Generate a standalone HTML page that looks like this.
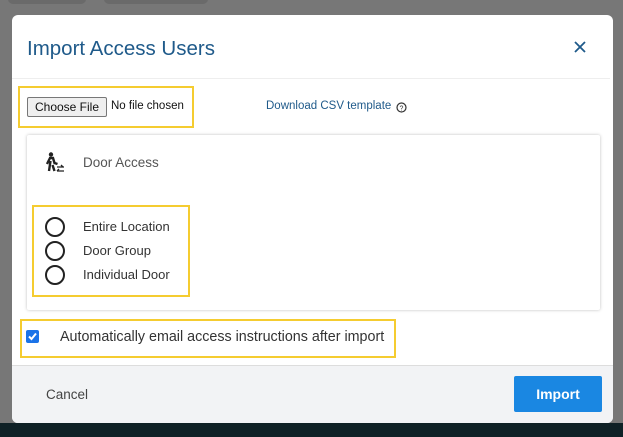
<!DOCTYPE html>
<html><head><style>
*{margin:0;padding:0;box-sizing:border-box}
body{width:623px;height:437px;background:#777;position:relative;overflow:hidden;font-family:"Liberation Sans",sans-serif;color:#333}
.a{position:absolute}
</style></head><body>
<div class="a" style="left:8px;top:-6px;width:78px;height:10px;border-radius:5px;background:#6a6a6a"></div>
<div class="a" style="left:104px;top:-6px;width:104px;height:10px;border-radius:5px;background:#6a6a6a"></div>
<div class="a" style="left:0;top:423px;width:623px;height:14px;background:#0f2126"></div>
<div class="a" style="left:12px;top:15px;width:601px;height:408px;background:#fff;border-radius:6px;overflow:hidden">
  <div class="a" style="left:15px;top:22px;font-size:20.5px;color:#1f5a8a">Import Access Users</div>
  <svg class="a" style="left:561px;top:25px" width="14" height="14"><path d="M2 2L12 12M12 2L2 12" stroke="#1f5a8a" stroke-width="1.8"/></svg>
  <div class="a" style="left:0;top:63px;width:598px;height:1px;background:#eee"></div>
  <div class="a" style="left:6px;top:71px;width:176px;height:42px;border:2px solid #f5cc30"></div>
  <div class="a" style="left:15px;top:82px;width:80px;height:20px;border:1px solid #777;background:#efefef;border-radius:2px;font-size:12px;text-align:center;line-height:18px;color:#111">Choose File</div>
  <div class="a" style="left:99px;top:85px;font-size:11.5px;color:#111">No file chosen</div>
  <div class="a" style="left:254px;top:85px;font-size:11.5px;color:#1f5a8a">Download CSV template</div>
  <svg class="a" style="left:384px;top:87px" width="11" height="11"><circle cx="5.5" cy="5.5" r="4.5" fill="none" stroke="#333" stroke-width="1.2"/><text x="5.5" y="8.5" font-size="7" text-anchor="middle" font-family="Liberation Sans" fill="#333">?</text></svg>
  <div class="a" style="left:15px;top:120px;width:573px;height:175px;background:#fff;box-shadow:0 0 3px rgba(0,0,0,.25);border-radius:2px"></div>
  <svg class="a" style="left:32px;top:137px" width="22" height="22"><circle cx="7" cy="2.5" r="2.2" fill="#222"/><path d="M5 6h4l1.5 5 3 1M6 6l-3 6M6.5 9l-1.5 10M8.5 13l2 6" stroke="#222" stroke-width="2.4" fill="none"/><path d="M13 15h7M17 13l2 2M20 19h-7M15 17l-2 2" stroke="#222" stroke-width="1.3" fill="none"/></svg>
  <div class="a" style="left:71px;top:140px;font-size:13.5px;color:#555">Door Access</div>
  <div class="a" style="left:20px;top:190px;width:158px;height:92px;border:2px solid #f5cc30"></div>
  <div class="a" style="left:33px;top:202px;width:20px;height:20px;border:2px solid #222;border-radius:50%"></div>
  <div class="a" style="left:33px;top:226px;width:20px;height:20px;border:2px solid #222;border-radius:50%"></div>
  <div class="a" style="left:33px;top:250px;width:20px;height:20px;border:2px solid #222;border-radius:50%"></div>
  <div class="a" style="left:71px;top:204px;font-size:13px;color:#333">Entire Location</div>
  <div class="a" style="left:71px;top:228px;font-size:13px;color:#333">Door Group</div>
  <div class="a" style="left:71px;top:252px;font-size:13px;color:#333">Individual Door</div>
  <div class="a" style="left:8px;top:304px;width:376px;height:39px;border:2px solid #f5cc30"></div>
  <div class="a" style="left:14px;top:315px;width:13px;height:13px;background:#1a73e8;border-radius:2px"></div>
  <svg class="a" style="left:14px;top:315px" width="13" height="13"><path d="M3 6.5l2.5 2.5L10 3.5" stroke="#fff" stroke-width="2" fill="none"/></svg>
  <div class="a" style="left:48px;top:314px;font-size:14.3px;color:#333">Automatically email access instructions after import</div>
  <div class="a" style="left:0;top:350px;width:601px;height:58px;background:#f2f3f5;border-top:1px solid #ddd"></div>
  <div class="a" style="left:34px;top:372px;font-size:13.5px;color:#444">Cancel</div>
  <div class="a" style="left:502px;top:361px;width:88px;height:36px;background:#1a87e2;border-radius:2px;color:#fff;font-size:14px;font-weight:bold;text-align:center;line-height:36px">Import</div>
</div>
</body></html>
